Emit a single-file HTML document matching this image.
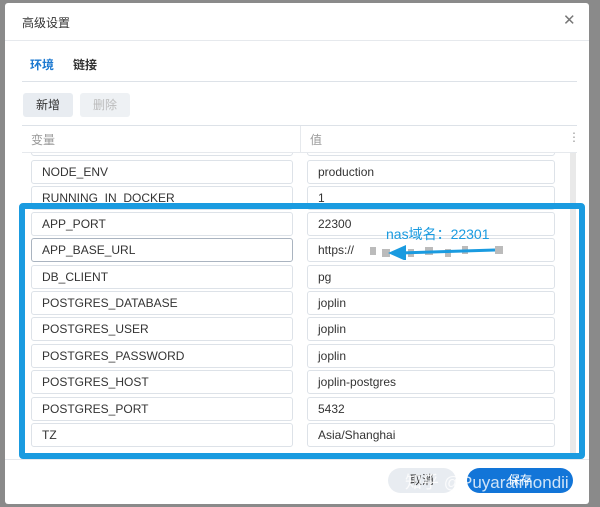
<!DOCTYPE html><html><head><meta charset="utf-8"><style>
body{margin:0;width:600px;height:507px;background:#8a8a8a;font-family:"Liberation Sans","Noto Sans CJK SC",sans-serif;position:relative;overflow:hidden}
.dlg{position:absolute;left:5px;top:3px;width:584px;height:501px;background:#fff;border-radius:3px}
.a{position:absolute}
.in{position:absolute;border:1px solid #dde2e8;border-radius:3px;background:#fff;font-size:12px;color:#333;line-height:22px;padding-left:10px;box-sizing:border-box;height:24px}
.clip{position:absolute;left:0;top:153px;width:600px;height:300px;overflow:hidden}
.b{position:absolute;background:#bbb;width:6px;height:8px}
</style></head><body>
<div class="dlg"></div>
<div class="a" style="left:22px;top:14px;font-size:12px;color:#333">高级设置</div>
<div class="a" style="left:563px;top:11px;font-size:15px;color:#777">✕</div>
<div class="a" style="left:5px;top:40px;width:584px;height:1px;background:#e6e9ed"></div>
<div class="a" style="left:30px;top:56px;font-size:12px;color:#1b78d0;font-weight:bold">环境</div>
<div class="a" style="left:73px;top:56px;font-size:12px;color:#333;font-weight:bold">链接</div>
<div class="a" style="left:22px;top:81px;width:555px;height:1px;background:#dde2e8"></div>
<div class="a" style="left:23px;top:93px;width:50px;height:24px;background:#e8ecf1;border-radius:3px;font-size:12px;color:#333;text-align:center;line-height:24px">新增</div>
<div class="a" style="left:80px;top:93px;width:50px;height:24px;background:#eef1f4;border-radius:3px;font-size:12px;color:#bbb;text-align:center;line-height:24px">删除</div>
<div class="a" style="left:22px;top:125px;width:555px;height:1px;background:#dde2e8"></div>
<div class="a" style="left:22px;top:152px;width:555px;height:1px;background:#e6e9ed"></div>
<div class="a" style="left:300px;top:126px;width:1px;height:26px;background:#e6e9ed"></div>
<div class="a" style="left:31px;top:131px;font-size:12px;color:#999">变量</div>
<div class="a" style="left:310px;top:131px;font-size:12px;color:#999">值</div>
<div class="a" style="left:568px;top:130px;font-size:12px;color:#999">⋮</div>
<div class="a" style="left:570px;top:153px;width:6px;height:300px;background:#e9e9e9"></div>
<div class="clip" id="rows"></div>
<div class="b" style="left:370px;top:247px"></div><div class="b" style="left:382px;top:249px;width:8px"></div><div class="b" style="left:408px;top:249px"></div><div class="b" style="left:425px;top:247px;width:8px"></div><div class="b" style="left:445px;top:249px"></div><div class="b" style="left:462px;top:246px"></div><div class="b" style="left:495px;top:246px;width:8px"></div>
<div class="a" style="left:19px;top:203px;width:566px;height:256px;border:6px solid #1a9be0;border-radius:4px;box-sizing:border-box"></div>
<div class="a" style="left:386px;top:224px;font-size:14px;color:#1a9be0">nas域名：22301</div>
<svg class="a" style="left:380px;top:240px" width="120" height="20"><line x1="115" y1="10" x2="20" y2="13" stroke="#1a9be0" stroke-width="3"/><polygon points="8,13 26,5 26,21" fill="#1a9be0"/></svg>
<div class="a" style="left:5px;top:459px;width:584px;height:1px;background:#e6e9ed"></div>
<div class="a" style="left:388px;top:468px;width:68px;height:25px;background:#e8ecf1;border-radius:13px;font-size:12px;color:#333;text-align:center;line-height:25px">取消</div>
<div class="a" style="left:467px;top:468px;width:106px;height:25px;background:#1275d8;border-radius:13px;font-size:12px;color:#fff;text-align:center;line-height:25px">保存</div>
<div class="a" style="left:405px;top:468px;font-size:17px;color:rgba(255,255,255,.8)">知乎 @Puyaraimondii</div>
<script>
var d=[["","",-21],["NODE_ENV","production",7],["RUNNING_IN_DOCKER","1",33],["APP_PORT","22300",59],["APP_BASE_URL","https://",85],["DB_CLIENT","pg",112],["POSTGRES_DATABASE","joplin",138],["POSTGRES_USER","joplin",164],["POSTGRES_PASSWORD","joplin",191],["POSTGRES_HOST","joplin-postgres",217],["POSTGRES_PORT","5432",244],["TZ","Asia/Shanghai",270]];
var h="";d.forEach(function(r,i){var t=r[2];h+='<div class="in" style="left:31px;top:'+t+'px;width:262px'+(i==4?';border-color:#aab4c0':'')+'">'+r[0]+'</div><div class="in" style="left:307px;top:'+t+'px;width:248px">'+r[1]+'</div>';});
document.getElementById("rows").innerHTML=h;
</script>
</body></html>
